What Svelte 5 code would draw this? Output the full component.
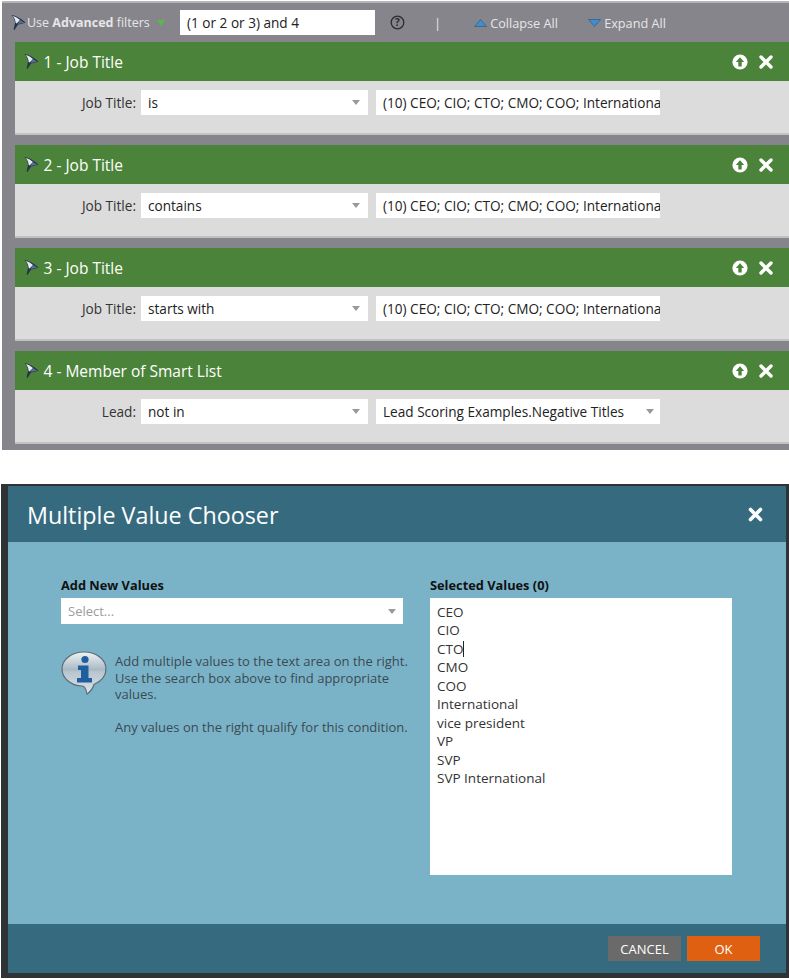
<script lang="ts">
	const filters = [
		{ title: '1 - Job Title', label: 'Job Title:', op: 'is', value: '(10) CEO; CIO; CTO; CMO; COO; International; vice president' },
		{ title: '2 - Job Title', label: 'Job Title:', op: 'contains', value: '(10) CEO; CIO; CTO; CMO; COO; International; vice president' },
		{ title: '3 - Job Title', label: 'Job Title:', op: 'starts with', value: '(10) CEO; CIO; CTO; CMO; COO; International; vice president' },
		{ title: '4 - Member of Smart List', label: 'Lead:', op: 'not in', value: 'Lead Scoring Examples.Negative Titles', select: true }
	];
	const before = ['CEO', 'CIO'];
	const after = ['CMO', 'COO', 'International', 'vice president', 'VP', 'SVP', 'SVP International'];
</script>

{#snippet funnel()}
	<svg class="funnel" width="17" height="17" viewBox="0 0 17 17">
		<path d="M1.500 1 C6 1.500 11 4.500 15.500 8.500 C12.500 9.800 9.800 10.300 8 10.500 L4.500 16 L3.600 15.500 L5 9 C5 6 3.500 3 1.500 1 Z" fill="#26324a" />
		<path d="M2.800 2 C6 3 8.500 4.500 10 6 L6.500 9.500 L5.600 8.800 C5.600 6.300 4.500 3.800 2.800 2 Z" fill="#e6ebf1" />
		<path d="M10 6 C11.500 7 13 8 14 8.700 C11.500 9.400 9 9.800 7.500 10 Z" fill="#5a6f92" />
	</svg>
{/snippet}

<div class="page">
	<section class="filters">
		<div class="toolbar">
			{@render funnel()}
			<span class="use">Use <b>Advanced</b> filters</span>
			<svg class="green-arrow" width="8" height="6" viewBox="0 0 8 6"><path d="M0 0h8L4 6z" fill="#58b947" /></svg>
			<div class="rule">(1 or 2 or 3) and 4</div>
			<svg class="help" width="15" height="15" viewBox="0 0 15 15">
				<circle cx="7.500" cy="7.500" r="6.300" fill="none" stroke="#2b2b2b" stroke-width="1.300" />
				<text x="7.500" y="11" text-anchor="middle" font-size="10" font-weight="700" fill="#2b2b2b" font-family="Open Sans, sans-serif">?</text>
			</svg>
			<span class="sep">|</span>
			<svg class="tri" width="13" height="8" viewBox="0 0 13 8"><path d="M6.500 .5L12.500 7.500H.5z" fill="#3f8fd0" stroke="#25527c" stroke-width=".6" /></svg>
			<span class="link collapse">Collapse All</span>
			<svg class="tri expand-tri" width="13" height="8" viewBox="0 0 13 8"><path d="M.5 .5H12.500L6.500 7.500z" fill="#3f8fd0" stroke="#25527c" stroke-width=".6" /></svg>
			<span class="link">Expand All</span>
		</div>

		{#each filters as f}
			<div class="card">
				<header class="card-head">
					{@render funnel()}
					<span class="card-title">{f.title}</span>
					<svg class="up" width="16" height="16" viewBox="0 0 16 16">
						<circle cx="8" cy="8" r="7.600" fill="#fff" />
						<path d="M8 3.200L12.200 8H9.700v4.400H6.300V8H3.800z" fill="#4c833a" />
					</svg>
					<svg class="close" width="14" height="14" viewBox="0 0 14 14">
						<path d="M2 2L12 12M12 2L2 12" stroke="#fff" stroke-width="3.400" stroke-linecap="round" />
					</svg>
				</header>
				<div class="card-body">
					<span class="field-label">{f.label}</span>
					<div class="select">
						<span>{f.op}</span>
						<i class="caret"></i>
					</div>
					<div class="multi" class:with-caret={f.select}>
						<span class="multi-text">{f.value}</span>
						{#if f.select}<i class="caret"></i>{/if}
					</div>
				</div>
			</div>
		{/each}
	</section>

	<section class="dialog">
		<header class="dialog-head">
			<h1>Multiple Value Chooser</h1>
			<svg width="15" height="15" viewBox="0 0 15 15">
				<path d="M2.500 2.500L12.500 12.500M12.500 2.500L2.500 12.500" stroke="#fff" stroke-width="3.600" stroke-linecap="round" />
			</svg>
		</header>
		<div class="dialog-body">
			<div class="col-left">
				<h2>Add New Values</h2>
				<div class="chooser">
					<span>Select...</span>
					<i class="caret"></i>
				</div>
				<div class="info">
					<svg width="46" height="44" viewBox="0 0 46 44">
						<defs>
							<linearGradient id="bubble" x1="0" y1="0" x2="0" y2="1">
								<stop offset="0" stop-color="#f0f4f6" />
								<stop offset=".42" stop-color="#a9b9c4" />
								<stop offset=".48" stop-color="#b8c6cf" />
								<stop offset="1" stop-color="#dbe3e8" />
							</linearGradient>
						</defs>
						<path d="M23 1C10.500 1 1 8.500 1 18c0 9 8.500 16.500 20 17 2 .1 4 2 5 8 3-2 6-6 7-9.500C39.500 30.500 45 25 45 18 45 8.500 35.500 1 23 1z" fill="url(#bubble)" stroke="#5b6b76" stroke-width="1.200" />
						<circle cx="24" cy="8.500" r="3.600" fill="#1f5f9e" />
						<path d="M17 14.500h10.500v12.500h3.500v4.500H16V27h4V19h-3z" fill="#1f5f9e" />
					</svg>
					<div class="info-text">
						<p>Add multiple values to the text area on the right. Use the search box above to find appropriate values.</p>
						<p>Any values on the right qualify for this condition.</p>
					</div>
				</div>
			</div>
			<div class="col-right">
				<h2>Selected Values (0)</h2>
				<div class="values">
					{#each before as v}<div>{v}</div>{/each}
					<div>CTO<i class="cursor"></i></div>
					{#each after as v}<div>{v}</div>{/each}
				</div>
			</div>
		</div>
		<footer class="dialog-foot">
			<button class="btn cancel">CANCEL</button>
			<button class="btn ok">OK</button>
		</footer>
	</section>
</div>

<style>
	:global(body) {
		margin: 0;
		background: #fff;
	}

	.page {
		width: 789px;
		height: 979px;
		overflow: hidden;
		font-family: 'Open Sans', 'Liberation Sans', sans-serif;
		padding-top: 1px;
		box-sizing: border-box;
	}

	.filters {
		margin-left: 2px;
		height: 449px;
		box-sizing: border-box;
		background: #87858c;
		border-top: 2px solid #b5b4b8;
	}

	.toolbar {
		display: flex;
		align-items: center;
		height: 39px;
		padding-left: 8px;
		box-sizing: border-box;
		color: #e6e6e8;
		font-size: 12.500px;
	}

	.use {
		margin-left: 0;
		width: 125px;
		white-space: nowrap;
	}

	.green-arrow {
		margin-left: 5px;
	}

	.rule {
		margin-left: 15px;
		width: 195px;
		height: 25px;
		line-height: 25px;
		background: #fff;
		color: #222;
		font-size: 13.600px;
		padding-left: 7px;
		box-sizing: border-box;
	}

	.help {
		margin-left: 15px;
	}

	.sep {
		margin-left: 29px;
		font-size: 13px;
	}

	.tri {
		margin-left: 33px;
	}

	.link {
		margin-left: 3px;
		font-size: 12.700px;
	}

	.collapse {
		width: 88px;
	}

	.tri.expand-tri {
		margin-left: 10px;
	}

	.card {
		margin-left: 12.500px;
		margin-bottom: 11px;
		height: 92px;
	}

	.card-head {
		display: flex;
		align-items: center;
		height: 39px;
		padding: 0 16px 0 8px;
		box-sizing: border-box;
		background: #4c833a;
		color: #fff;
	}

	.card-title {
		flex: 1;
		margin-left: 4px;
		font-size: 15.500px;
	}

	.close {
		margin-left: 11px;
	}

	.card-body {
		display: flex;
		height: 54px;
		box-sizing: border-box;
		padding-top: 9px;
		background: #dcdcdc;
		border-bottom: 2px solid #c2c2c2;
		font-size: 13.600px;
		color: #222;
	}

	.field-label {
		width: 121.500px;
		line-height: 25px;
		text-align: right;
		color: #333;
	}

	.select {
		display: flex;
		align-items: center;
		justify-content: space-between;
		width: 227px;
		height: 25px;
		margin-left: 5px;
		padding: 0 8px 0 7px;
		box-sizing: border-box;
		background: #fff;
	}

	.caret {
		width: 0;
		height: 0;
		border-left: 4.500px solid transparent;
		border-right: 4.500px solid transparent;
		border-top: 5px solid #999;
	}

	.multi {
		display: flex;
		align-items: center;
		width: 284px;
		height: 25px;
		margin-left: 8px;
		padding-left: 7px;
		box-sizing: border-box;
		background: #fff;
		overflow: hidden;
		white-space: nowrap;
	}

	.multi.with-caret {
		justify-content: space-between;
		padding-right: 6px;
	}

	.dialog {
		display: flex;
		flex-direction: column;
		height: 494px;
		margin: 34px 0 0 1px;
		box-sizing: border-box;
		border-style: solid;
		border-color: #2e3436;
		border-width: 2px 3px 5px 7px;
	}

	.dialog-head {
		display: flex;
		align-items: center;
		justify-content: space-between;
		height: 56px;
		padding: 1px 23px 0 19px;
		box-sizing: border-box;
		background: #366b7f;
		color: #fff;
	}

	h1 {
		margin: 0;
		font-size: 23.300px;
		font-weight: 400;
	}

	.dialog-body {
		flex: 1;
		display: flex;
		background: #7ab3c8;
		padding: 35px 0 0 53px;
		color: #333;
	}

	h2 {
		margin: 0 0 4px;
		height: 17px;
		line-height: 17px;
		font-size: 12.800px;
		font-weight: 700;
		color: #111;
	}

	.col-left {
		width: 342px;
	}

	.chooser {
		display: flex;
		align-items: center;
		justify-content: space-between;
		height: 26px;
		padding: 0 7px;
		box-sizing: border-box;
		background: #fff;
		color: #9c9c9c;
		font-size: 13px;
	}

	.info {
		display: flex;
		margin-top: 27px;
	}

	.info svg {
		flex: none;
	}

	.info-text {
		margin: 2px -10px 0 8px;
		font-size: 13px;
		line-height: 16.600px;
		color: #3a4a52;
	}

	.info-text p {
		margin: 0 0 16px;
	}

	.col-right {
		width: 302px;
		margin-left: 27px;
	}

	.values {
		height: 277px;
		padding: 4.500px 7px;
		box-sizing: border-box;
		background: #fff;
		font-size: 13.500px;
		line-height: 18.500px;
		color: #333;
	}

	.cursor {
		display: inline-block;
		width: 1px;
		height: 16px;
		background: #222;
		vertical-align: -3px;
	}

	.dialog-foot {
		display: flex;
		justify-content: flex-end;
		align-items: center;
		gap: 6px;
		height: 49px;
		padding-right: 26px;
		box-sizing: border-box;
		background: #366b7f;
	}

	.btn {
		width: 73px;
		height: 25px;
		padding: 0;
		border: none;
		color: #fff;
		font-family: inherit;
		font-size: 13px;
	}

	.cancel {
		background: #6a6a6a;
	}

	.ok {
		background: #e06012;
	}
</style>
